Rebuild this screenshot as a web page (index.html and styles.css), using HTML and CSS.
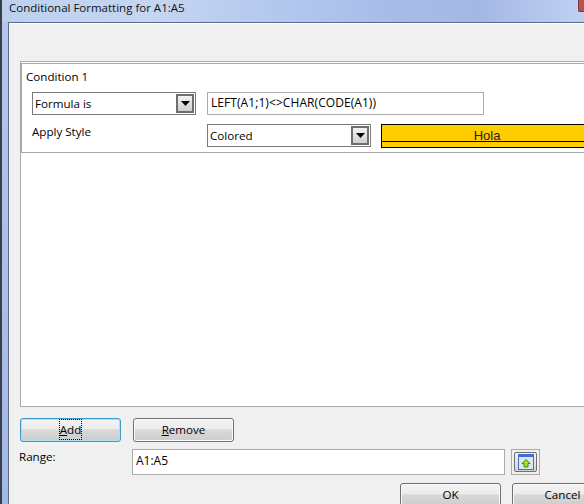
FILE: index.html
```html
<!DOCTYPE html>
<html lang="en">
<head>
<meta charset="utf-8">
<title>Conditional Formatting for A1:A5</title>
<link rel="stylesheet" href="styles.css">
</head>
<body>
<div class="window">
  <div class="titlebar">
    <span class="title">Conditional Formatting for A1:A5</span>
    <span class="close"></span>
  </div>
  <div class="dialog">
    <div class="list">
      <section class="condition">
        <div class="cond-title">Condition 1</div>
        <div class="row row-first">
          <div class="select"><span class="value">Formula is</span><span class="drop"><svg width="9" height="5" viewBox="0 0 9 5"><path d="M0 0h9L4.500 5z" fill="#000"/></svg></span></div>
          <div class="field field-formula">LEFT(A1;1)&lt;&gt;CHAR(CODE(A1))</div>
        </div>
        <div class="row row-second">
          <div class="apply-label">Apply Style</div>
          <div class="select"><span class="value">Colored</span><span class="drop"><svg width="9" height="5" viewBox="0 0 9 5"><path d="M0 0h9L4.500 5z" fill="#000"/></svg></span></div>
          <div class="preview"><span class="hola">Hola</span></div>
        </div>
      </section>
    </div>
    <div class="actions">
      <button class="btn btn-default"><span class="focus"><u>A</u>dd</span></button>
      <button class="btn"><u>R</u>emove</button>
    </div>
    <div class="range">
      <div class="range-label">Ran<u>g</u>e:</div>
      <div class="field field-range">A1:A5</div>
      <div class="shrink">
        <span class="shrink-inner">
          <svg width="16" height="16" viewBox="0 0 16 16">
            <rect x="0.500" y="0.500" width="15" height="15" fill="#dfe6ee" stroke="#3f6fc4"/>
            <rect x="0" y="0" width="16" height="3" fill="#3f6fd8"/>
            <path d="M8 5.500 12 9.500H10V13H6V9.500H4z" fill="#a6e22a" stroke="#3f8a10" stroke-width="1"/>
          </svg>
        </span>
      </div>
    </div>
    <div class="footer">
      <button class="btn">OK</button>
      <button class="btn">Cancel</button>
    </div>
  </div>
</div>
</body>
</html>
```

FILE: styles.css
```css
* { box-sizing: border-box; }
html, body { margin: 0; padding: 0; }
body {
  width: 584px;
  height: 504px;
  overflow: hidden;
  font-family: "Open Sans", "Noto Sans", sans-serif;
  font-size: 11.6px;
  color: #000;
  background: #a9bdea;
}
.window {
  width: 584px;
  height: 504px;
  border-left: 2px solid #3a3f4a;
  display: flex;
  flex-direction: column;
  overflow: hidden;
  background: linear-gradient(180deg, #b4c6ee, #a4b8e6);
}
.titlebar {
  position: relative;
  flex: 0 0 22px;
  margin-left: -2px;
  padding-left: 9px;
  line-height: 16px;
  background: linear-gradient(90deg, #bcd0ee 0, #c6d6f2 25%, #b2c6ee 50%, #a6bce8 68%, #a4b8e4 82%, #c0d0f4 100%);
}
.title { display: block; color: #111; font-size: 11.5px; }
.close {
  position: absolute;
  right: 0;
  top: 0;
  width: 6px;
  height: 12px;
  background: #b5544c;
  border-left: 1px solid #7a3a38;
  border-bottom: 1px solid #7a3a38;
  border-bottom-left-radius: 2px;
}
.dialog {
  flex: 1;
  margin-left: 6px;
  border-top: 1px solid #5a6b8c;
  border-left: 1px solid #5a6b8c;
  background: #f0f0f0;
  padding: 38px 0 0 11px;
  box-shadow: inset 0 1px 0 #fff;
}
.list {
  width: 600px;
  height: 346px;
  background: #fff;
  border: 1px solid #a9a9a9;
  border-right: 0;
}
.condition {
  height: 90px;
  border-top: 1px solid #a9a9a9;
  border-left: 1px solid #a9a9a9;
  border-bottom: 1px solid #a9a9a9;
  margin-top: 1px;
  padding: 4px 0 0 4px;
}
.cond-title { line-height: 17px; }
.row { display: flex; align-items: flex-start; }
.row-first { margin-top: 7px; padding-left: 6px; }
.row-second { margin-top: 9px; padding-left: 6px; }
.select {
  flex: none;
  height: 23px;
  display: flex;
  align-items: center;
  justify-content: space-between;
  background: #fff;
  padding: 1px;
  width: 164px;
  border: 1px solid #7a7a7a;
}
.select .value { padding-left: 1px; line-height: 15px; margin-top: -1px; }
.drop {
  width: 18px;
  height: 19px;
  display: flex;
  align-items: center;
  justify-content: center;
  border: 2px solid #6f6f6f;
  background: linear-gradient(180deg, #f2f2f2, #cfcfcf);
}
.field {
  flex: none;
  background: #fff;
  border: 1px solid #ababab;
  padding-left: 3px;
}
.field-formula {
  margin-left: 11px;
  width: 277px;
  height: 23px;
  line-height: 20px;
  font-size: 12px;
  letter-spacing: 0.07px;
}
.apply-label { flex: 0 0 175px; line-height: 16px; }
.preview {
  flex: 0 0 260px;
  margin-left: 10px;
  height: 24px;
  background: linear-gradient(180deg, #ffcc00 0, #ffcc00 16px, #000 16px, #000 17px, #ffcc00 17px);
  border: 1px solid #000;
  text-align: center;
  font-family: "Liberation Sans", Arial, sans-serif;
  font-size: 13px;
  line-height: 22px;
  color: #222;
  padding-right: 48px;
}
.actions { display: flex; gap: 12px; margin-top: 11px; }
.btn {
  flex: none;
  width: 101px;
  height: 24px;
  padding: 0 0 2px;
  font: inherit;
  color: #000;
  background: linear-gradient(180deg, #f3f3f3 0, #ececec 45%, #d8d8d8 50%, #cdcdcd 100%);
  border: 1px solid #707070;
  border-radius: 3px;
  box-shadow: inset 0 0 0 1px #fbfbfb;
}
.btn-default {
  border-color: #3c9cc8;
  box-shadow: inset 0 0 0 1px #a9e0f4;
}
.focus { outline: 1px dotted #000; padding: 2px 0; }
.range { display: flex; align-items: flex-start; margin-top: 7px; }
.range-label { flex: 0 0 113px; margin-left: -1px; line-height: 16px; }
.field-range { width: 373px; height: 26px; line-height: 22px; font-size: 12px; }
.shrink {
  flex: none;
  margin-left: 6px;
  width: 29px;
  height: 26px;
  border: 1px solid #ababab;
  padding: 2px;
}
.shrink-inner {
  display: flex;
  width: 23px;
  height: 20px;
  align-items: center;
  justify-content: center;
  border: 1px solid #6f6f6f;
  border-radius: 2px;
  background: linear-gradient(180deg, #f2f2f2, #d4d4d4);
}
.footer { display: flex; gap: 11px; margin-top: 8px; padding-left: 380px; }
```
